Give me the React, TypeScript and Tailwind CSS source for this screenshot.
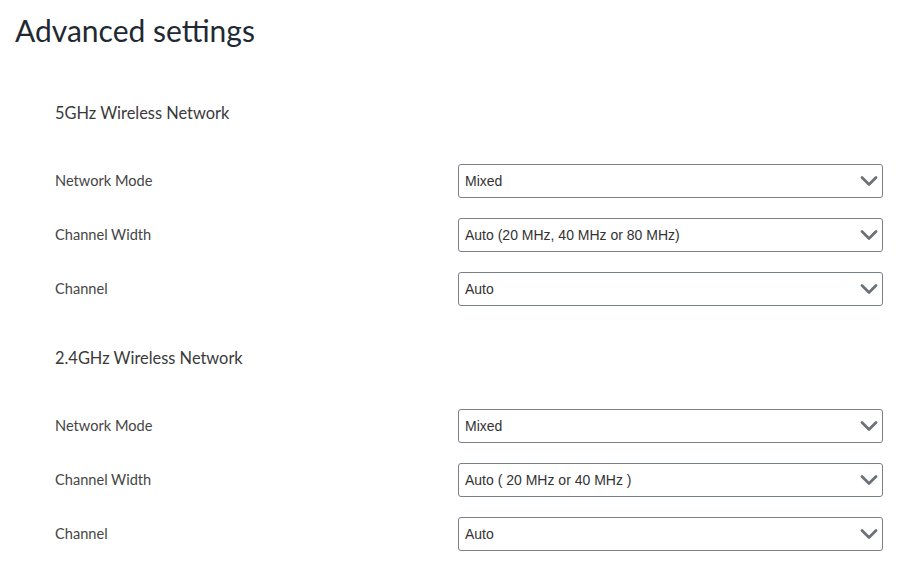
import React from 'react';

type Row = { label: string; value: string };
type Section = { title: string; rows: Row[] };

const sections: Section[] = [
  {
    title: '5GHz Wireless Network',
    rows: [
      { label: 'Network Mode', value: 'Mixed' },
      { label: 'Channel Width', value: 'Auto (20 MHz, 40 MHz or 80 MHz)' },
      { label: 'Channel', value: 'Auto' },
    ],
  },
  {
    title: '2.4GHz Wireless Network',
    rows: [
      { label: 'Network Mode', value: 'Mixed' },
      { label: 'Channel Width', value: 'Auto ( 20 MHz or 40 MHz )' },
      { label: 'Channel', value: 'Auto' },
    ],
  },
];

const Chevron = () => (
  <svg width="18" height="12" viewBox="0 0 18 12" fill="none" className="text-[#6c7278]">
    <path d="M2 2.5l7 7 7-7" stroke="currentColor" strokeWidth="2.8" strokeLinecap="round" strokeLinejoin="round" />
  </svg>
);

const SelectBox = ({ value }: { value: string }) => (
  <div className="flex h-[34px] w-[425px] items-center justify-between rounded-[3px] border border-[#7a8087] bg-white pl-[6px] pr-[4px]">
    <span className="font-['Liberation_Sans',Arial,sans-serif] text-[14px] text-[#333]">{value}</span>
    <Chevron />
  </div>
);

export default function App() {
  return (
    <div className="min-h-[570px] w-[910px] bg-white font-['Lato','Noto_Sans',sans-serif]">
      <h1 className="px-[15px] pt-[12px] text-[30px] leading-[36px] font-normal text-[#1f2933]">Advanced settings</h1>
      <div className="pl-[55px] pr-[27px]">
        {sections.map((s, i) => (
          <div key={s.title} className={i === 0 ? 'mt-[53px]' : 'mt-[40px]'}>
            <h2 className="text-[16.4px] leading-[24px] text-[#3a3a3a]">{s.title}</h2>
            <div className="mt-[39px] flex flex-col gap-[20px]">
              {s.rows.map((r) => (
                <div key={r.label} className="flex items-center justify-between">
                  <span className="text-[14.6px] text-[#454545]">{r.label}</span>
                  <SelectBox value={r.value} />
                </div>
              ))}
            </div>
          </div>
        ))}
      </div>
    </div>
  );
}
